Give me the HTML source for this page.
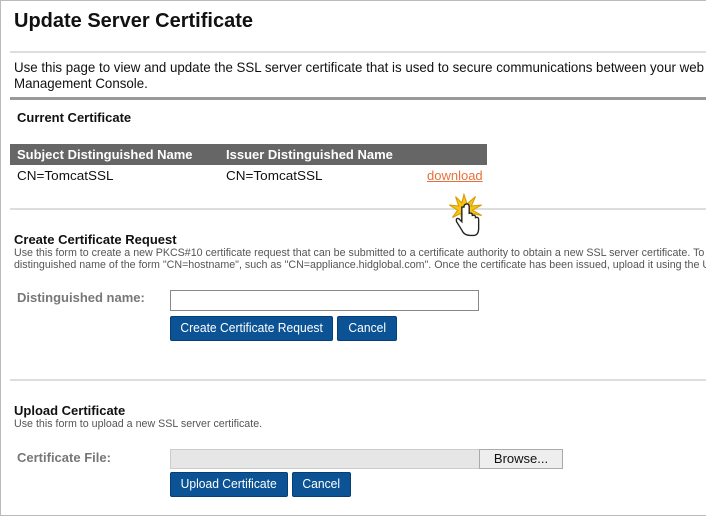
<!DOCTYPE html>
<html><head><style>
body{margin:0;width:706px;height:516px;overflow:hidden;background:#fff;font-family:"Liberation Sans",Arial,sans-serif;position:relative}
.t{position:absolute;white-space:nowrap;transform-origin:0 0}
.hr{position:absolute;left:10px;right:0;background:#ddd}
.btn{position:absolute;background:#0b5394;border:1px solid #063f73;border-radius:2px;color:#fff;font-size:13px;line-height:22px;text-align:center;box-sizing:border-box;white-space:nowrap}
.btn span{display:inline-block;transform:scaleX(.93)}
</style></head><body>
<div style="position:absolute;left:0;top:0;width:706px;height:516px;box-sizing:border-box;border:1px solid #bbb;border-right:none"></div>
<div class="t" style="left:14px;top:10px;font-size:20px;font-weight:bold;color:#111">Update Server Certificate</div>
<div class="hr" style="top:51px;height:2px"></div>
<div class="t" style="left:14px;top:59px;font-size:14px;line-height:16px;color:#111;transform:scaleX(.95)">Use this page to view and update the SSL server certificate that is used to secure communications between your web<br>Management Console.</div>
<div class="hr" style="top:97px;height:3px;background:#999"></div>
<div class="t" style="left:17px;top:110px;font-size:13px;font-weight:bold;color:#111">Current Certificate</div>
<div style="position:absolute;left:10px;top:144px;width:477px;height:21px;background:#666"></div>
<div class="t" style="left:17px;top:147px;font-size:13px;font-weight:bold;color:#fff">Subject Distinguished Name</div>
<div class="t" style="left:226px;top:147px;font-size:13px;font-weight:bold;color:#fff">Issuer Distinguished Name</div>
<div class="t" style="left:17px;top:168px;font-size:13px;color:#111;transform:scaleX(1.04)">CN=TomcatSSL</div>
<div class="t" style="left:226px;top:168px;font-size:13px;color:#111;transform:scaleX(1.04)">CN=TomcatSSL</div>
<div class="t" style="left:427px;top:168px;font-size:13px;color:#e8703a;text-decoration:underline">download</div>
<div class="hr" style="top:208px;height:2px"></div>
<svg style="position:absolute;left:444px;top:192px" width="42" height="48" viewBox="0 0 40 45">
<polygon points="19,2 22,11 30,4 26,13 36,12 27,17 36,22 26,20 29,28 21,21 17,28 16,20 8,24 13,17 5,12 14,13 11,4 17,10" fill="#f5c518" stroke="#d99a00" stroke-width="1"/>
<path d="M17,14 v14 l-3,-3 q-3,-1 -2,3 l5,8 q2,5 8,5 h3 q5,0 5,-7 v-8 q0,-3 -3,-2 q0,-3 -3,-2 q0,-3 -3,-2 v-6 q0,-3 -2,-3 q-3,0 -3,3 z" fill="#fff" stroke="#222" stroke-width="1.3"/>
</svg>
<div class="t" style="left:14px;top:232px;font-size:13px;font-weight:bold;color:#111">Create Certificate Request</div>
<div class="t" style="left:14px;top:247px;font-size:11px;line-height:12px;color:#555;transform:scaleX(.97)">Use this form to create a new PKCS#10 certificate request that can be submitted to a certificate authority to obtain a new SSL server certificate. To<br>distinguished name of the form "CN=hostname", such as "CN=appliance.hidglobal.com". Once the certificate has been issued, upload it using the U</div>
<div class="t" style="left:17px;top:290px;font-size:13px;font-weight:bold;color:#777">Distinguished name:</div>
<div style="position:absolute;left:170px;top:290px;width:309px;height:21px;box-sizing:border-box;border:1px solid #888;background:#fff"></div>
<div class="btn" style="left:170px;top:316px;width:163px;height:25px"><span>Create Certificate Request</span></div>
<div class="btn" style="left:337px;top:316px;width:60px;height:25px"><span>Cancel</span></div>
<div class="hr" style="top:379px;height:2px"></div>
<div class="t" style="left:14px;top:403px;font-size:13px;font-weight:bold;color:#111">Upload Certificate</div>
<div class="t" style="left:14px;top:418px;font-size:11px;color:#555;transform:scaleX(.97)">Use this form to upload a new SSL server certificate.</div>
<div class="t" style="left:17px;top:450px;font-size:13px;font-weight:bold;color:#777">Certificate File:</div>
<div style="position:absolute;left:170px;top:449px;width:310px;height:20px;box-sizing:border-box;border:1px solid #ccc;background:#e6e6e6"></div>
<div style="position:absolute;left:479px;top:449px;width:84px;height:20px;box-sizing:border-box;border:1px solid #aaa;background:#eee;font-size:13px;line-height:18px;text-align:center;color:#111">Browse...</div>
<div class="btn" style="left:170px;top:472px;width:118px;height:25px"><span>Upload Certificate</span></div>
<div class="btn" style="left:292px;top:472px;width:59px;height:25px"><span>Cancel</span></div>
</body></html>
